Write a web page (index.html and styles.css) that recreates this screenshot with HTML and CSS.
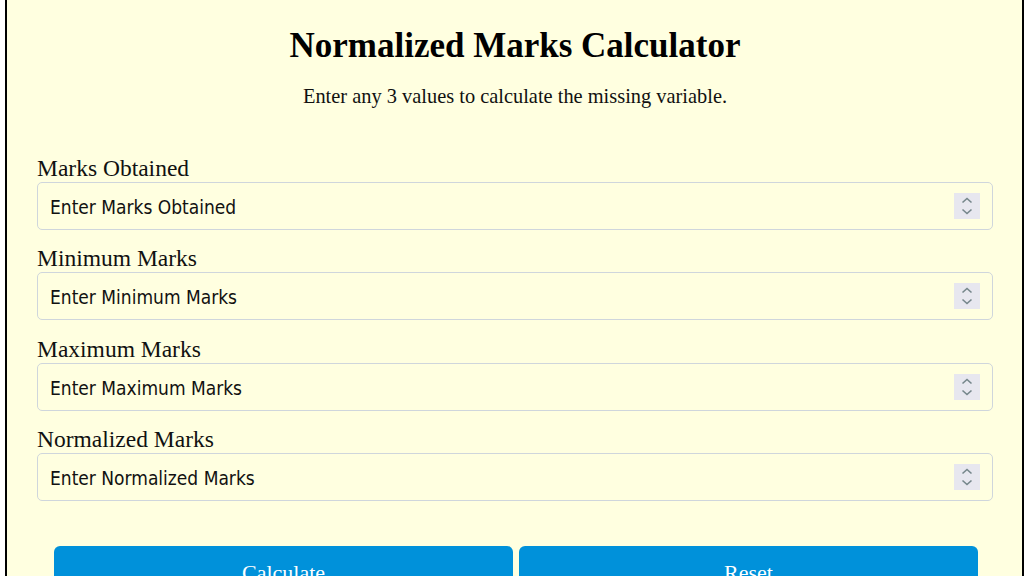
FILE: index.html
```html
<!DOCTYPE html>
<html lang="en">
<head>
<meta charset="utf-8">
<title>Normalized Marks Calculator</title>
<link rel="stylesheet" href="styles.css">
</head>
<body>
<div class="calc">
  <h1 class="title">Normalized Marks Calculator</h1>
  <p class="subtitle">Enter any 3 values to calculate the missing variable.</p>

  <div class="field">
    <label class="label" for="obt">Marks Obtained</label>
    <div class="box">
      <input class="num" id="obt" type="text" placeholder="Enter Marks Obtained">
      <span class="spin"><svg width="26" height="26" viewBox="0 0 26 26"><path d="M8.5 9.5 L13 5.5 L17.5 9.5 M8.5 16.5 L13 20.5 L17.5 16.5" fill="none" stroke="#76878b" stroke-width="1.6"/></svg></span>
    </div>
  </div>

  <div class="field">
    <label class="label" for="min">Minimum Marks</label>
    <div class="box">
      <input class="num" id="min" type="text" placeholder="Enter Minimum Marks">
      <span class="spin"><svg width="26" height="26" viewBox="0 0 26 26"><path d="M8.5 9.5 L13 5.5 L17.5 9.5 M8.5 16.5 L13 20.5 L17.5 16.5" fill="none" stroke="#76878b" stroke-width="1.6"/></svg></span>
    </div>
  </div>

  <div class="field">
    <label class="label" for="max">Maximum Marks</label>
    <div class="box">
      <input class="num" id="max" type="text" placeholder="Enter Maximum Marks">
      <span class="spin"><svg width="26" height="26" viewBox="0 0 26 26"><path d="M8.5 9.5 L13 5.5 L17.5 9.5 M8.5 16.5 L13 20.5 L17.5 16.5" fill="none" stroke="#76878b" stroke-width="1.6"/></svg></span>
    </div>
  </div>

  <div class="field">
    <label class="label" for="norm">Normalized Marks</label>
    <div class="box">
      <input class="num" id="norm" type="text" placeholder="Enter Normalized Marks">
      <span class="spin"><svg width="26" height="26" viewBox="0 0 26 26"><path d="M8.5 9.5 L13 5.5 L17.5 9.5 M8.5 16.5 L13 20.5 L17.5 16.5" fill="none" stroke="#76878b" stroke-width="1.6"/></svg></span>
    </div>
  </div>

  <div class="actions">
    <button class="btn" type="button">Calculate</button>
    <button class="btn" type="button">Reset</button>
  </div>
</div>
</body>
</html>
```

FILE: styles.css
```css
html, body {
  margin: 0;
  padding: 0;
  background: #ffffff;
  height: 100%;
  overflow: hidden;
}

.calc {
  margin-left: 5px;
  border-left: 2px solid #000;
  border-right: 2px solid #000;
  background: #ffffe0;
  min-height: 100%;
  padding: 26px 29px 40px 30px;
  box-sizing: border-box;
  font-family: "Liberation Serif", "Times New Roman", serif;
  color: #111;
}

.title {
  margin: 0 0 18px;
  font-size: 35px;
  line-height: 40px;
  font-weight: bold;
  text-align: center;
  color: #000;
}

.subtitle {
  margin: 0 0 47px;
  font-size: 20.4px;
  line-height: 24px;
  text-align: center;
}

.field {
  margin-bottom: 15.33px;
}

.label {
  display: block;
  font-size: 23.5px;
  line-height: 26px;
  margin-bottom: 1px;
}

.box {
  display: flex;
  align-items: center;
  height: 48px;
  box-sizing: border-box;
  border: 1px solid #cfd6dc;
  border-radius: 5px;
  padding: 0 12px 0 12px;
}

.num {
  flex: 1;
  min-width: 0;
  border: none;
  outline: none;
  background: transparent;
  padding: 2px 0 0 0;
  font-family: "DejaVu Sans Condensed", "DejaVu Sans", sans-serif;
  font-stretch: condensed;
  font-size: 19px;
  color: #111;
}

.num::placeholder {
  color: #111;
  opacity: 1;
}

.spin {
  display: flex;
  width: 26px;
  height: 26px;
  background: #e7e7ef;
}

.actions {
  display: flex;
  gap: 6px;
  margin: 45px 15px 0 17px;
}

.btn {
  flex: 1;
  border: none;
  border-radius: 6px;
  background: #0091da;
  color: #fff;
  font-family: "Liberation Serif", "Times New Roman", serif;
  font-size: 22px;
  padding: 14px 0;
  cursor: pointer;
}
```
